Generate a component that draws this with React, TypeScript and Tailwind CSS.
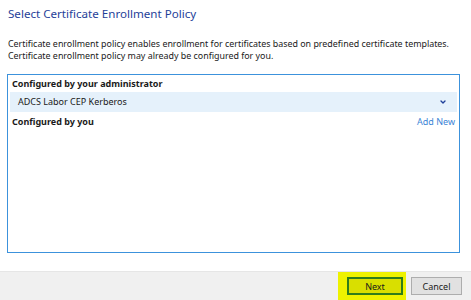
import { ChevronDown } from "lucide-react";

export default function App() {
  return (
    <div
      className="flex h-[300px] w-[471px] flex-col bg-white text-[#1a1a1a]"
      style={{ fontFamily: '"Noto Sans", "Open Sans", sans-serif' }}
    >
      <div className="flex flex-1 flex-col px-[7px]">
        <h1 className="mt-[5px] pl-[1px] text-[11.6px] leading-[18px] text-[#1f3f99]">
          Select Certificate Enrollment Policy
        </h1>
        <p className="mt-[15px] pl-[1px] text-[8.9px] leading-[12px]">
          Certificate enrollment policy enables enrollment for certificates based on predefined certificate templates.
          <br />
          Certificate enrollment policy may already be configured for you.
        </p>
        <div className="mt-[12px] flex h-[179px] w-[453px] flex-col border border-[#3c92dc] px-[2px] pt-[1px]">
          <div className="pl-[2px] text-[9px] font-bold leading-[15px]">Configured by your administrator</div>
          <div className="mt-[1px] flex h-[20px] items-center justify-between bg-[#e5f1fb] pl-[8px] pr-[10px]">
            <span className="text-[9px]">ADCS Labor CEP Kerberos</span>
            <ChevronDown size={8} strokeWidth={4} className="text-[#1f3f99]" />
          </div>
          <div className="mt-[2px] flex items-center justify-between pl-[2px] pr-[2px]">
            <span className="text-[9px] font-bold leading-[15px]">Configured by you</span>
            <span className="text-[9px] leading-[15px] text-[#3c84d6]">Add New</span>
          </div>
        </div>
      </div>
      <div className="flex h-[29px] items-stretch justify-end border-t border-[#e6e6e6] bg-[#f0f0f0] pr-[9px]">
        <div className="flex w-[68px] items-center justify-end bg-[#eef200] pr-[3px]">
          <button className="h-[18px] w-[56px] border-2 border-[#2f7d1a] bg-[#d9df00] text-[9px] leading-none">
            Next
          </button>
        </div>
        <div className="ml-[5px] flex items-center">
          <button className="h-[18px] w-[51px] border border-[#adadad] bg-[#e1e1e1] text-[9px] leading-none">
            Cancel
          </button>
        </div>
      </div>
    </div>
  );
}
